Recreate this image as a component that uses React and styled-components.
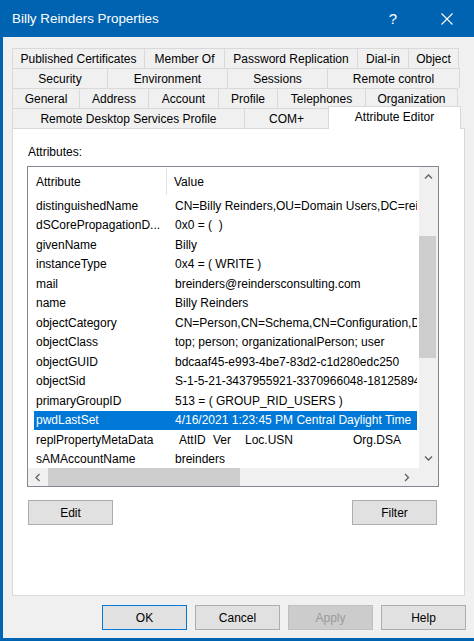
import styled, { createGlobalStyle } from "styled-components";

const GlobalStyle = createGlobalStyle`
  * { box-sizing: border-box; }
  body {
    margin: 0;
    overflow: hidden;
    font-family: "Liberation Sans", Arial, sans-serif;
    font-size: 12px;
    color: #000;
  }
`;

const tabRows = [
  [
    ["Published Certificates", 133],
    ["Member Of", 81],
    ["Password Replication", 134],
    ["Dial-in", 52],
    ["Object", 51],
  ],
  [
    ["Security", 96],
    ["Environment", 121],
    ["Sessions", 101],
    ["Remote control", 133],
  ],
  [
    ["General", 68],
    ["Address", 70],
    ["Account", 71],
    ["Profile", 60],
    ["Telephones", 89],
    ["Organization", 93],
  ],
  [
    ["Remote Desktop Services Profile", 233],
    ["COM+", 85],
    ["Attribute Editor", 133, true],
  ],
];

const attributes = [
  ["distinguishedName", "CN=Billy Reinders,OU=Domain Users,DC=reindersconsulting,DC=com"],
  ["dSCorePropagationD...", "0x0 = (  )"],
  ["givenName", "Billy"],
  ["instanceType", "0x4 = ( WRITE )"],
  ["mail", "breinders@reindersconsulting.com"],
  ["name", "Billy Reinders"],
  ["objectCategory", "CN=Person,CN=Schema,CN=Configuration,DC=reindersconsulting,DC=com"],
  ["objectClass", "top; person; organizationalPerson; user"],
  ["objectGUID", "bdcaaf45-e993-4be7-83d2-c1d280edc250"],
  ["objectSid", "S-1-5-21-3437955921-3370966048-1812589470-1105"],
  ["primaryGroupID", "513 = ( GROUP_RID_USERS )"],
  ["pwdLastSet", "4/16/2021 1:23:45 PM Central Daylight Time", true],
  ["replPropertyMetaData", null],
  ["sAMAccountName", "breinders"],
];

const metaColumns = [
  ["AttID", 34],
  ["Ver", 32],
  ["Loc.USN", 108],
  ["Org.DSA", 120],
];

export default function App() {
  return (
    <>
      <GlobalStyle />
      <Frame>
        <TitleBar>
          <TitleText>Billy Reinders Properties</TitleText>
          <CaptionButton>?</CaptionButton>
          <CaptionButton>
            <svg width="12" height="12" viewBox="0 0 12 12">
              <path d="M0.5 0.5 L11.5 11.5 M11.5 0.5 L0.5 11.5" stroke="#fff" strokeWidth="1.1" />
            </svg>
          </CaptionButton>
        </TitleBar>

        <Client>
          <TabStrip>
            {tabRows.map((row, i) => (
              <TabRow key={i}>
                {row.map(([label, w, active]) => (
                  <Tab key={label} $w={w} $active={active}>
                    {label}
                  </Tab>
                ))}
              </TabRow>
            ))}
          </TabStrip>

          <Panel>
            <FieldLabel>Attributes:</FieldLabel>
            <ListBox>
              <ListContent>
                <Header>
                  <HeaderCell $first>Attribute</HeaderCell>
                  <HeaderCell>Value</HeaderCell>
                </Header>
                {attributes.map(([name, value, selected]) => (
                  <Row key={name} $selected={selected}>
                    <NameCell>{name}</NameCell>
                    <ValueCell>
                      {value === null
                        ? metaColumns.map(([t, w]) => (
                            <MetaCell key={t} $w={w}>
                              {t}
                            </MetaCell>
                          ))
                        : value}
                    </ValueCell>
                  </Row>
                ))}
              </ListContent>

              <VScroll>
                <ArrowBox $h={20}>
                  <Chevron dir="up" />
                </ArrowBox>
                <Track>
                  <VThumb $top={49} $size={122} />
                </Track>
                <ArrowBox $h={20}>
                  <Chevron dir="down" />
                </ArrowBox>
              </VScroll>

              <HScroll>
                <ArrowBox $w={20}>
                  <Chevron dir="left" />
                </ArrowBox>
                <HThumb $size={192} />
                <Track />
                <ArrowBox $w={26}>
                  <Chevron dir="right" />
                </ArrowBox>
              </HScroll>
              <Corner />
            </ListBox>

            <ActionRow>
              <DialogButton>Edit</DialogButton>
              <DialogButton>Filter</DialogButton>
            </ActionRow>
          </Panel>

          <ButtonBar>
            <DialogButton $default>OK</DialogButton>
            <DialogButton>Cancel</DialogButton>
            <DialogButton $disabled>Apply</DialogButton>
            <DialogButton>Help</DialogButton>
          </ButtonBar>
        </Client>
      </Frame>
    </>
  );
}

function Chevron({ dir }) {
  const pts = {
    up: "1,5.5 4.5,2 8,5.5",
    down: "1,2.5 4.5,6 8,2.5",
    left: "5.5,1 2,4.5 5.5,8",
    right: "3,1 6.5,4.5 3,8",
  }[dir];
  return (
    <svg width="9" height="9" viewBox="0 0 9 9">
      <polyline points={pts} fill="none" stroke="#606060" strokeWidth="1.3" />
    </svg>
  );
}

const Frame = styled.div`
  width: 474px;
  height: 641px;
  background: #0063b1;
  display: flex;
  flex-direction: column;
  overflow: hidden;
`;

const TitleBar = styled.div`
  height: 37px;
  flex-shrink: 0;
  display: flex;
  align-items: center;
  padding-left: 12px;
  color: #fff;
  font-size: 13.4px;
`;

const TitleText = styled.div`
  flex: 1;
`;

const CaptionButton = styled.div`
  width: 54px;
  height: 37px;
  display: flex;
  align-items: center;
  justify-content: center;
  font-size: 15px;
  color: #fff;
`;

const Client = styled.div`
  flex: 1;
  min-height: 0;
  margin: 0 0 3px 3px;
  background: #f0f0f0;
  display: flex;
  flex-direction: column;
  padding: 11px 8px 8px 9px;
`;

const TabStrip = styled.div`
  display: flex;
  flex-direction: column;
  flex-shrink: 0;
`;

const TabRow = styled.div`
  height: 20px;
  display: flex;
  align-items: flex-end;
`;

const Tab = styled.div`
  width: ${(p) => p.$w}px;
  height: ${(p) => (p.$active ? 23 : 20)}px;
  margin-right: -1px;
  margin-bottom: ${(p) => (p.$active ? -1 : 0)}px;
  display: flex;
  align-items: center;
  justify-content: center;
  padding-bottom: ${(p) => (p.$active ? 3 : 0)}px;
  white-space: nowrap;
  background: ${(p) => (p.$active ? "#fff" : "#f0f0f0")};
  border: 1px solid #d9d9d9;
  border-bottom: none;
  position: relative;
  z-index: ${(p) => (p.$active ? 1 : 0)};
`;

const Panel = styled.div`
  flex: 1;
  min-height: 0;
  margin-right: 1px;
  background: #fff;
  border: 1px solid #d9d9d9;
  padding: 16px 0 0 14px;
  display: flex;
  flex-direction: column;
`;

const FieldLabel = styled.div`
  line-height: 14px;
  padding-left: 1px;
  margin-bottom: 7px;
`;

const ListBox = styled.div`
  width: 412px;
  height: 321px;
  border: 1px solid #828790;
  display: grid;
  grid-template-columns: 1fr 19px;
  grid-template-rows: 1fr 18px;
  overflow: hidden;
`;

const ListContent = styled.div`
  overflow: hidden;
  min-width: 0;
`;

const Header = styled.div`
  height: 29px;
  display: flex;
`;

const HeaderCell = styled.div`
  display: flex;
  align-items: center;
  width: ${(p) => (p.$first ? "139px" : "auto")};
  padding-left: ${(p) => (p.$first ? 8 : 7)}px;
  border-right: ${(p) => (p.$first ? "1px solid #e5e5e5" : "none")};
  margin: 1px 0;
`;

const Row = styled.div`
  height: 19.5px;
  margin: 0 2px 0 6px;
  display: flex;
  align-items: center;
  overflow: hidden;
  white-space: nowrap;
  background: ${(p) => (p.$selected ? "#0078d7" : "transparent")};
  color: ${(p) => (p.$selected ? "#fff" : "#000")};
`;

const NameCell = styled.div`
  width: 141px;
  flex-shrink: 0;
  padding-left: 2px;
  overflow: hidden;
`;

const ValueCell = styled.div`
  flex-shrink: 0;
  display: flex;
  white-space: pre;
`;

const MetaCell = styled.span`
  width: ${(p) => p.$w}px;
  &:first-child {
    padding-left: 4px;
    width: ${(p) => p.$w + 4}px;
  }
`;

const VScroll = styled.div`
  background: #f0f0f0;
  display: flex;
  flex-direction: column;
`;

const HScroll = styled.div`
  background: #f0f0f0;
  display: flex;
`;

const ArrowBox = styled.div`
  flex-shrink: 0;
  height: ${(p) => (p.$h ? `${p.$h}px` : "100%")};
  width: ${(p) => (p.$w ? `${p.$w}px` : "100%")};
  display: flex;
  align-items: center;
  justify-content: center;
`;

const Track = styled.div`
  flex: 1;
  min-height: 0;
`;

const VThumb = styled.div`
  margin: ${(p) => p.$top}px 2px 0 0;
  height: ${(p) => p.$size}px;
  background: #cdcdcd;
`;

const HThumb = styled.div`
  width: ${(p) => p.$size}px;
  flex-shrink: 0;
  background: #cdcdcd;
`;

const Corner = styled.div`
  background: #f0f0f0;
`;

const ActionRow = styled.div`
  width: 412px;
  margin-top: 13px;
  padding: 0 2px 0 1px;
  display: flex;
  justify-content: space-between;
`;

const DialogButton = styled.div`
  width: 85px;
  height: 25px;
  display: flex;
  align-items: center;
  justify-content: center;
  background: ${(p) => (p.$disabled ? "#cccccc" : "#e1e1e1")};
  border: 1px solid
    ${(p) => (p.$default ? "#0078d7" : p.$disabled ? "#bfbfbf" : "#adadad")};
  color: ${(p) => (p.$disabled ? "#9a9a9a" : "#000")};
`;

const ButtonBar = styled.div`
  flex-shrink: 0;
  margin-top: 9px;
  display: flex;
  justify-content: flex-end;
  gap: 8px;
`;
